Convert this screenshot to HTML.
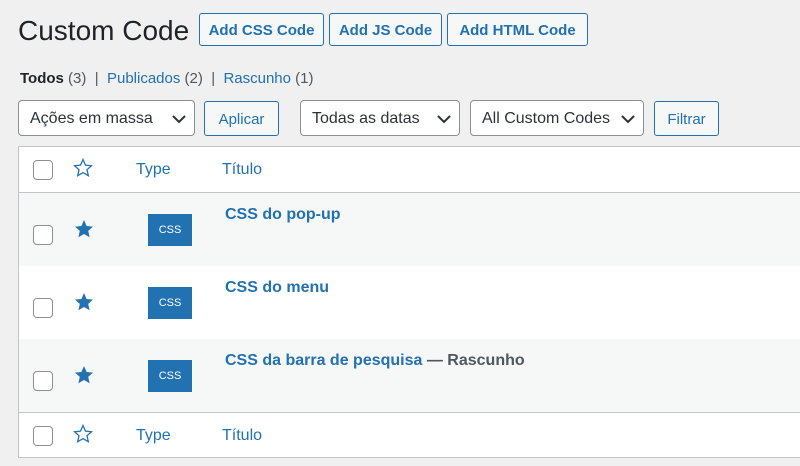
<!DOCTYPE html><html><head><style>
body{margin:0;width:800px;height:466px;background:#f0f0f1;font-family:"Liberation Sans",sans-serif;color:#1d2327;position:relative;overflow:hidden;font-size:15px}
.a{position:absolute}
h1{position:absolute;left:18px;top:13px;margin:0;font-weight:400;font-size:28px;line-height:36px;color:#1d2327}
.btn{position:absolute;height:31px;border:1px solid #2271b1;border-radius:3px;color:#2271b1;background:#f6f7f7;font-size:15px;line-height:31px;text-align:center;box-sizing:border-box}
.pb{font-weight:600;top:13px;height:33px;line-height:33px}
.sel{position:absolute;top:100px;height:36px;border:1px solid #8c8f94;border-radius:4px;background:#fff;font-size:16px;line-height:36px;padding-left:11px;box-sizing:border-box;color:#2c3338}
.sel svg{position:absolute;right:8px;top:13px}
.tbl{position:absolute;left:18px;top:146px;width:800px;height:312px;border:1px solid #c3c4c7;background:#fff;box-sizing:border-box}
.row{position:absolute;left:0;width:100%}
.cb{position:absolute;left:14px;width:18px;height:18px;border:1px solid #8c8f94;border-radius:4px;background:#fff}
.hd{color:#2271b1;font-size:16px;position:absolute}
.badge{position:absolute;left:129px;width:44px;height:32px;background:#2271b1;color:#fff;font-size:11px;text-align:center;line-height:32px}
.t{position:absolute;left:206px;color:#2271b1;font-weight:600;font-size:16px}
</style></head><body>
<h1>Custom Code</h1>
<div class="btn pb" style="left:199px;width:125px">Add CSS Code</div>
<div class="btn pb" style="left:329px;width:113px">Add JS Code</div>
<div class="btn pb" style="left:447px;width:141px">Add HTML Code</div>
<div class="a" style="left:20px;top:70px;font-size:15px;color:#50575e"><b style="color:#1d2327">Todos</b> (3) &nbsp;| &nbsp;<span style="color:#2271b1">Publicados</span> (2) &nbsp;| &nbsp;<span style="color:#2271b1">Rascunho</span> (1)</div>
<div class="sel" style="left:18px;width:177px">Ações em massa<svg width="14" height="10"><path d="M1 2l6 6 6-6" stroke="#2c3338" stroke-width="2" fill="none"/></svg></div>
<div class="btn" style="left:204px;top:101px;width:75px;height:35px;line-height:35px">Aplicar</div>
<div class="sel" style="left:300px;width:160px">Todas as datas<svg width="14" height="10"><path d="M1 2l6 6 6-6" stroke="#2c3338" stroke-width="2" fill="none"/></svg></div>
<div class="sel" style="left:470px;width:174px">All Custom Codes<svg width="14" height="10"><path d="M1 2l6 6 6-6" stroke="#2c3338" stroke-width="2" fill="none"/></svg></div>
<div class="btn" style="left:654px;top:101px;width:65px;height:35px;line-height:35px">Filtrar</div>
<div class="tbl">
<div class="row" style="top:0;height:45px;border-bottom:1px solid #c3c4c7">
<div class="cb" style="top:13px"></div>
<svg class="a" style="left:54px;top:11px" width="20" height="20" viewBox="0 0 20 20"><path d="M10 1.5l2.5 5.6 6 .6-4.5 4 1.3 6-5.3-3.1-5.3 3.1 1.3-6-4.5-4 6-.6z" fill="none" stroke="#2271b1" stroke-width="1.3"/></svg>
<div class="hd" style="left:117px;top:14px">Type</div><div class="hd" style="left:203px;top:14px">Título</div></div>
<div class="row" style="top:46px;height:73px;background:#f6f7f7"><div class="cb" style="top:32px"></div><svg class="a" style="left:55px;top:26px" width="20" height="20" viewBox="0 0 20 20"><path d="M10 1l2.6 6 6.4.6-4.8 4.3 1.4 6.3L10 15l-5.6 3.2 1.4-6.3L1 7.6l6.4-.6z" fill="#2271b1"/></svg><div class="badge" style="top:21px">CSS</div><div class="t" style="top:13px">CSS do pop-up</div></div>
<div class="row" style="top:119px;height:73px"><div class="cb" style="top:32px"></div><svg class="a" style="left:55px;top:26px" width="20" height="20" viewBox="0 0 20 20"><path d="M10 1l2.6 6 6.4.6-4.8 4.3 1.4 6.3L10 15l-5.6 3.2 1.4-6.3L1 7.6l6.4-.6z" fill="#2271b1"/></svg><div class="badge" style="top:21px">CSS</div><div class="t" style="top:13px">CSS do menu</div></div>
<div class="row" style="top:192px;height:73px;background:#f6f7f7"><div class="cb" style="top:32px"></div><svg class="a" style="left:55px;top:26px" width="20" height="20" viewBox="0 0 20 20"><path d="M10 1l2.6 6 6.4.6-4.8 4.3 1.4 6.3L10 15l-5.6 3.2 1.4-6.3L1 7.6l6.4-.6z" fill="#2271b1"/></svg><div class="badge" style="top:21px">CSS</div><div class="t" style="top:13px">CSS da barra de pesquisa <span style="color:#50575e">— Rascunho</span></div></div>
<div class="row" style="top:265px;height:45px;border-top:1px solid #c3c4c7">
<div class="cb" style="top:13px"></div>
<svg class="a" style="left:54px;top:11px" width="20" height="20" viewBox="0 0 20 20"><path d="M10 1.5l2.5 5.6 6 .6-4.5 4 1.3 6-5.3-3.1-5.3 3.1 1.3-6-4.5-4 6-.6z" fill="none" stroke="#2271b1" stroke-width="1.3"/></svg>
<div class="hd" style="left:117px;top:14px">Type</div><div class="hd" style="left:203px;top:14px">Título</div></div>
</div>
</body></html>
